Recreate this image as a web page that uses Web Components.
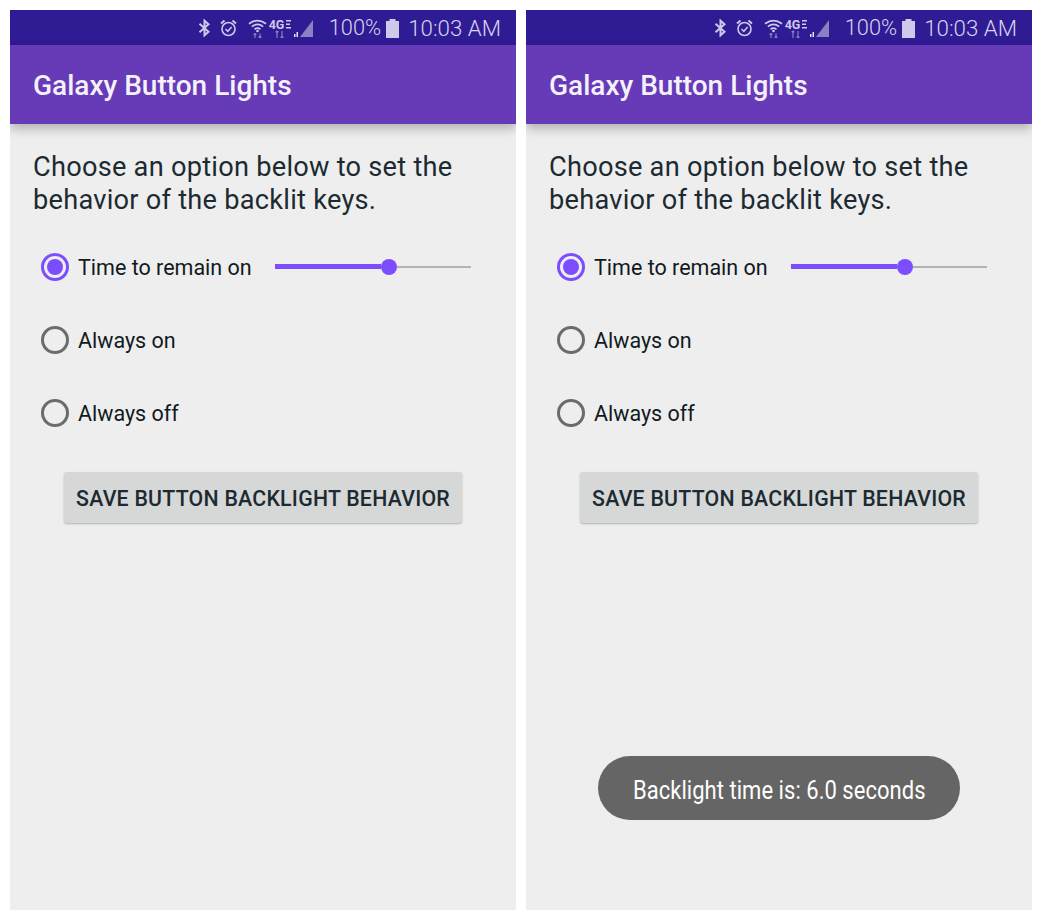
<!DOCTYPE html>
<html lang="en"><head><meta charset="utf-8"><title>Galaxy Button Lights</title>
<style>
html,body{margin:0;background:#fff}
body{width:1042px;height:920px;overflow:hidden;padding:10px;box-sizing:border-box;display:flex;gap:10px;font-family:Roboto,"Liberation Sans",sans-serif}
</style></head><body>
<phone-screen></phone-screen>
<phone-screen toast="Backlight time is: 6.0 seconds"></phone-screen>
<script>
const def=(name,html,init)=>customElements.define(name,class extends HTMLElement{
  constructor(){super();this.attachShadow({mode:'open'}).innerHTML=html;}
  connectedCallback(){init&&init(this);}
});
def('status-bar',`<style>
:host{display:flex;height:35px;background:#2f1b93;align-items:center;justify-content:flex-end;padding:1px 15px 0 0;color:#d8d3ee;box-sizing:border-box}
svg{display:block;flex:none}
.pct,.time{font:300 22.300px/34px Roboto,sans-serif;white-space:nowrap;letter-spacing:0}
.pct{font-size:21.800px}
.sig{position:relative;width:23px;height:20px;flex:none;margin:0 2px 0 2px}
.sig b{position:absolute;left:0;top:1px;font:700 12.500px/11px Roboto,sans-serif;letter-spacing:-.2px;color:#cfc8ea}
</style>
<svg width="13" height="18" viewBox="0 0 13 18" style="margin-right:9px" fill="none" stroke="#cfc8ea" stroke-width="2"><path d="M1.500 4.800 10.500 12.700 6.500 16.300V1.700L10.500 5.300 1.500 13.200"/></svg>
<svg width="17" height="18" viewBox="0 0 17 18" style="margin-right:11px" fill="none" stroke="#cfc8ea"><circle cx="8.500" cy="10" r="6.500" stroke-width="1.600"/><path d="M5.500 10 7.800 12.300 11.600 8" stroke-width="1.500"/><path d="M1 4.500 4.500 1.500M16 4.500 12.500 1.500" stroke-width="1.900"/></svg>
<svg width="19" height="19" viewBox="0 0 19 19" fill="none" stroke="#cfc8ea" stroke-width="1.700"><path d="M1 4.800Q9.500-1.500 18 4.800M3.800 7.600Q9.500 3.300 15.200 7.600M6.500 10.300Q9.500 8 12.500 10.300"/><circle cx="9.500" cy="12" r="1.300" fill="#cfc8ea" stroke="none"/><path d="M7 19v-4.500M5.600 15.800 7 14.500 8.400 15.800M12 14.500V19M10.600 17.700 12 19 13.400 17.700" stroke="#8d7fc4" stroke-width="1.200"/></svg>
<div class="sig"><b>4G</b><svg style="position:absolute;left:17px;top:2px" width="6" height="9" viewBox="0 0 6 9" fill="#cfc8ea"><path d="M0 0h5v1.500H0zM0 3.500h4V5H0zM0 7h5v1.500H0z"/></svg><svg style="position:absolute;left:4px;top:12px" width="14" height="8" viewBox="0 0 14 8" fill="none" stroke="#8d7fc4" stroke-width="1.200"><path d="M4 8V1M2.600 2.300 4 1l1.400 1.300M9 1v7M7.600 6.700 9 8l1.400-1.300"/></svg></div>
<svg width="19" height="19" viewBox="0 0 19 19" style="margin-right:16px"><path d="M19 1v17H6z" fill="#8d7fc4"/><path d="M0 18v-3h1.500v3zM2.500 18v-5H4v5z" fill="#e6e2f5"/></svg>
<span class="pct">100%</span>
<svg width="13" height="19" viewBox="0 0 13 19" style="margin:0 9px 0 5px"><path d="M3.500 0h6v2H13v17H0V2h3.500z" fill="#cfc8ea"/></svg>
<span class="time">10:03 AM</span>`);
def('app-bar',`<style>
:host{display:flex;align-items:center;height:79px;background:#673ab7;color:#f4f1fa;padding:3px 0 0 23px;box-sizing:border-box;box-shadow:0 5px 10px rgba(0,0,0,.25);position:relative;z-index:1}
span{font:500 28px/1 Roboto,sans-serif}
</style><span><slot></slot></span>`);
def('radio-row',`<style>
:host{display:flex;align-items:center;height:73px;color:#111a1e;font:400 21.500px/1 Roboto,sans-serif}
.r{width:28px;height:28px;border-radius:50%;border:3px solid #6b6b6b;box-sizing:border-box;flex:none;margin:0 9px 2px 0;display:flex;align-items:center;justify-content:center}
.r i{display:none;width:16px;height:16px;border-radius:50%;background:#7c4dff}
:host([checked]) .r{border-color:#7c4dff}
:host([checked]) .r i{display:block}
</style><div class="r"><i></i></div><slot></slot>`);
def('seek-bar',`<style>
:host{display:flex;align-items:center;width:196px;height:20px;margin:0 0 2px 23px}
.a{width:106px;height:5px;background:#7c4dff}
.t{width:16px;height:16px;border-radius:50%;background:#7c4dff;flex:none}
.b{flex:1;height:2px;background:#b3b3b3}
</style><div class="a"></div><div class="t"></div><div class="b"></div>`);
def('save-button',`<style>
:host{display:flex;align-items:center;justify-content:center;width:398px;height:51px;padding-top:2px;box-sizing:border-box;background:#d6d7d7;border-radius:3px;box-shadow:0 1px 2px rgba(0,0,0,.25);color:#1c2a31;font:500 21.300px/1 Roboto,sans-serif;letter-spacing:.24px;white-space:nowrap}
</style><slot></slot>`);
def('toast-pill',`<style>
:host{position:absolute;left:72px;top:746px;width:362px;height:64px;border-radius:32px;background:#656565;color:#fff;display:flex;align-items:center;justify-content:center;padding-top:4px;box-sizing:border-box}
span{display:inline-block;font:400 25px/1 Roboto,sans-serif;transform:scaleX(.88);letter-spacing:.04px;white-space:nowrap}
</style><span><slot></slot></span>`);
def('phone-screen',`<style>
:host{display:block;position:relative;width:506px;height:900px;background:#eee;overflow:hidden;flex:none}
main{display:block;padding:27px 31px 0}
h1{margin:0 0 15px -8px;font:400 27.200px/32.500px Roboto,sans-serif;letter-spacing:.25px;color:#1c2a31;white-space:nowrap}
.gap{height:22px}
save-button{margin-left:23px}
</style>
<status-bar></status-bar>
<app-bar>Galaxy Button Lights</app-bar>
<main>
<h1>Choose an option below to set the<br>behavior of the backlit keys.</h1>
<radio-row checked>Time to remain on<seek-bar></seek-bar></radio-row>
<radio-row>Always on</radio-row>
<radio-row>Always off</radio-row>
<div class="gap"></div>
<save-button>SAVE BUTTON BACKLIGHT BEHAVIOR</save-button>
</main>`,el=>{
  const t=el.getAttribute('toast'),s=el.shadowRoot;
  if(t&&!s.querySelector('toast-pill')){const p=document.createElement('toast-pill');p.textContent=t;s.appendChild(p);}
});
</script>
</body></html>
